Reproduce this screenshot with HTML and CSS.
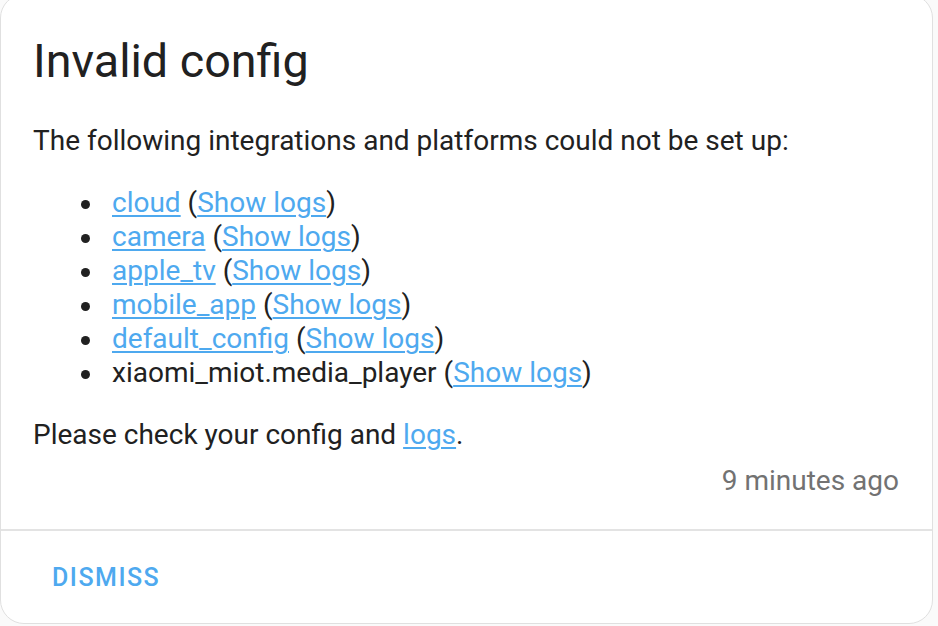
FILE: index.html
```html
<!DOCTYPE html>
<html>
<head>
<meta charset="utf-8">
<link rel="stylesheet" href="styles.css">
</head>
<body>
<div class="card">
  <div class="card-header">Invalid config</div>
  <div class="card-content">
    <p class="intro">The following integrations and platforms could not be set up:</p>
    <ul class="items">
      <li><a href="#">cloud</a> (<a href="#">Show logs</a>)</li>
      <li><a href="#">camera</a> (<a href="#">Show logs</a>)</li>
      <li><a href="#">apple_tv</a> (<a href="#">Show logs</a>)</li>
      <li><a href="#">mobile_app</a> (<a href="#">Show logs</a>)</li>
      <li><a href="#">default_config</a> (<a href="#">Show logs</a>)</li>
      <li>xiaomi_miot.media_player (<a href="#">Show logs</a>)</li>
    </ul>
    <p class="check">Please check your config and <a href="#">logs</a>.</p>
    <div class="time">9 minutes ago</div>
  </div>
  <div class="card-actions">
    <button class="btn">Dismiss</button>
  </div>
</div>
</body>
</html>
```
FILE: styles.css
```css
html, body {
  margin: 0;
  padding: 0;
  background: #fafafa;
}
body {
  font-family: Roboto, "Noto Sans", sans-serif;
  color: #212121;
  overflow: hidden;
}
.card {
  box-sizing: border-box;
  width: 933px;
  height: 630px;
  margin-top: -6px;
  background: #ffffff;
  border: 1px solid #e0e0e0;
  border-radius: 24px;
  display: flex;
  flex-direction: column;
}
.card-header {
  font-size: 46.7px;
  line-height: 64px;
  padding: 34px 32px 31px;
  color: #212121;
}
.card-content {
  padding: 0 32px;
  font-size: 28px;
  line-height: 34px;
}
.card-content p {
  margin: 0;
}
.intro {
  margin-bottom: 28px !important;
}
.items {
  margin: 0 0 28px;
  padding-left: 79px;
  list-style: none;
}
.items li::before {
  content: "";
  display: inline-block;
  width: 9px;
  height: 9px;
  border-radius: 50%;
  background: #212121;
  margin-left: -31px;
  margin-right: 22px;
  vertical-align: 3px;
}
a {
  color: #4ea9ef;
  text-decoration: underline;
  text-underline-offset: 3px;
  text-decoration-thickness: 2px;
}
.time {
  text-align: right;
  color: #727272;
  margin-top: 12px;
  padding-bottom: 31px;
  padding-right: 1px;
}
.card-actions {
  border-top: 2px solid #e3e3e3;
  flex: 1;
  display: flex;
  align-items: center;
  padding-left: 51px;
}
.btn {
  border: none;
  background: none;
  padding: 0;
  font-family: Roboto, "Noto Sans", sans-serif;
  font-weight: 500;
  font-size: 25px;
  letter-spacing: 1.5px;
  text-transform: uppercase;
  color: #4ea9ef;
  cursor: pointer;
}
```
